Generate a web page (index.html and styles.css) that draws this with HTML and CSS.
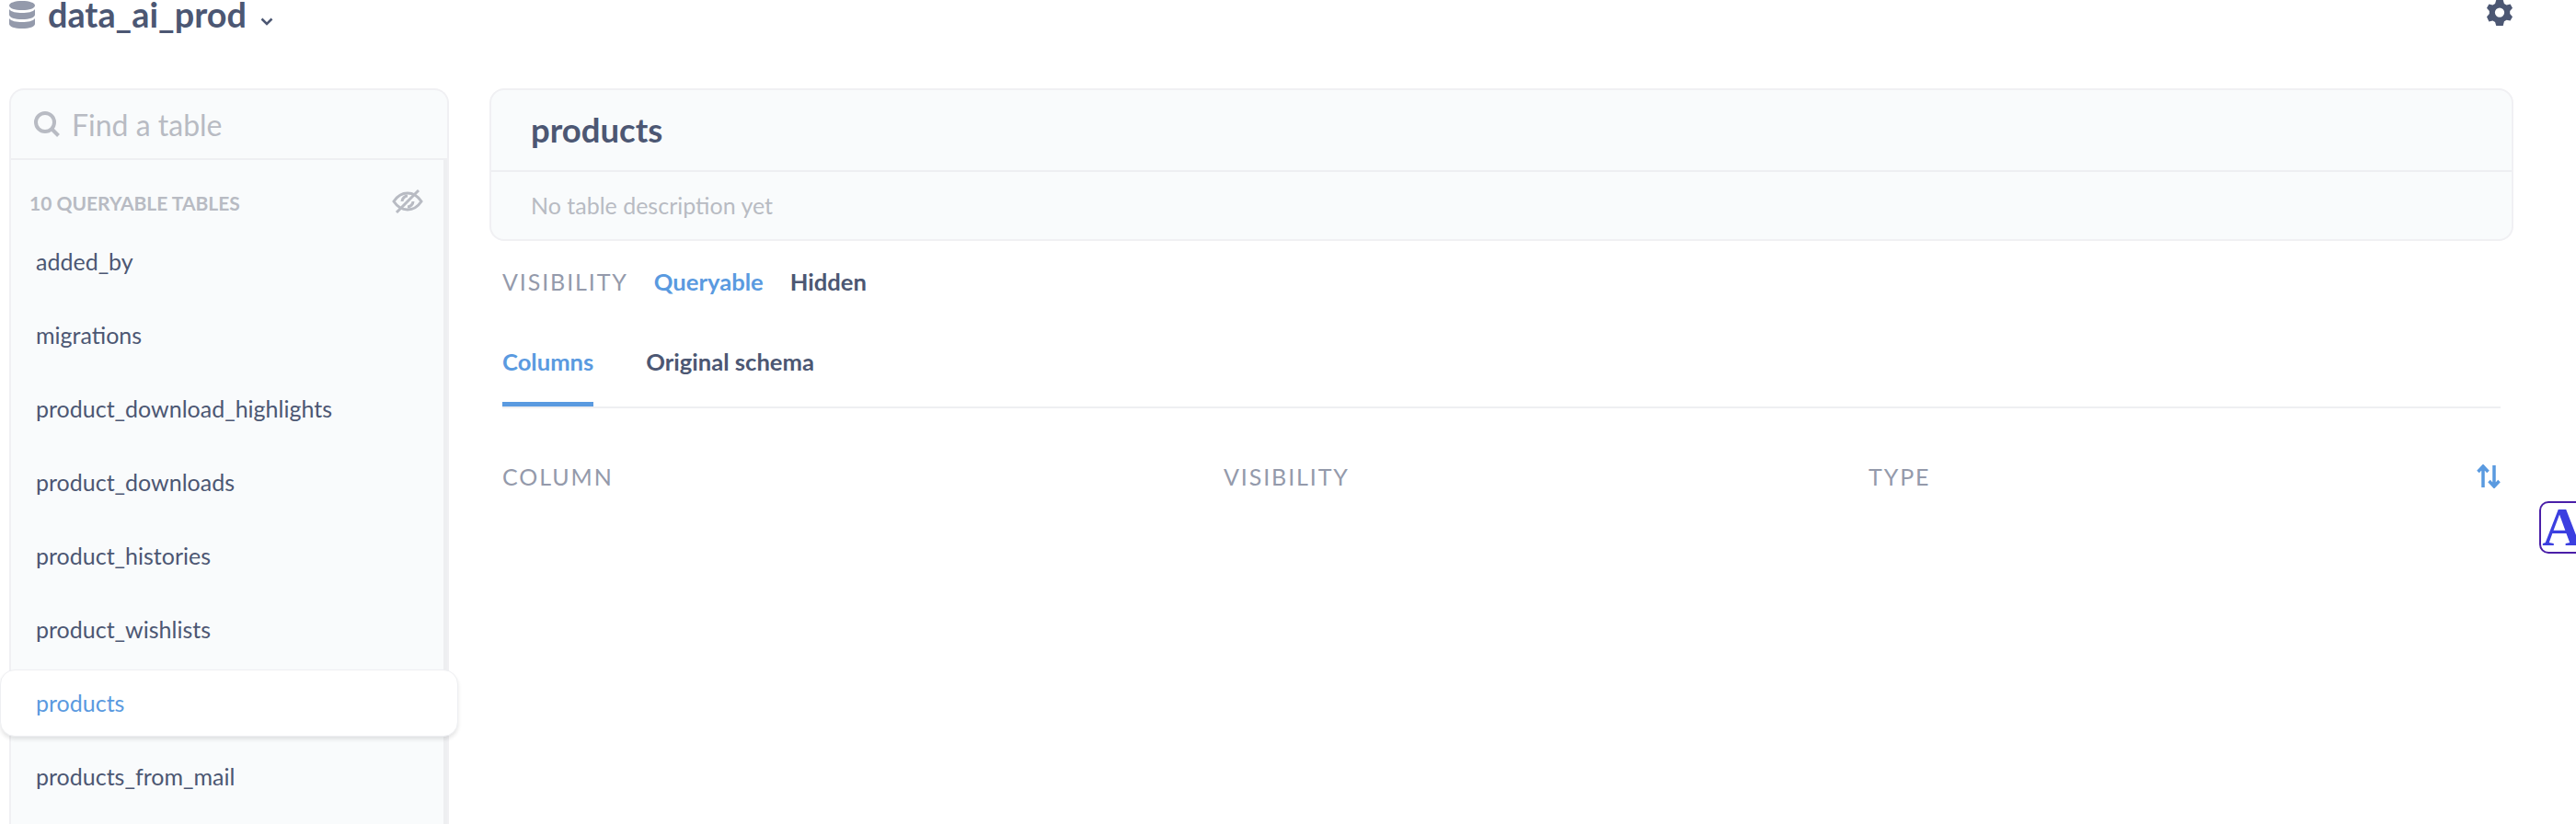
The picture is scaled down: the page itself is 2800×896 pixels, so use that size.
FILE: index.html
```html
<!DOCTYPE html>
<html lang="en">
<head>
  <meta charset="UTF-8" />
  <title>data_ai_prod - Table metadata</title>
  <link rel="stylesheet" href="styles.css">
</head>
<body>
  <div class="topbar">
    <div class="db-picker">
      <svg class="db-icon" viewBox="0 0 28 30"><path d="M14 0C6 0 0 2 0 5s6 5 14 5 14-2 14-5-6-5-14-5z"/><path d="M0 9v6c0 3 6 5 14 5s14-2 14-5V9c-2 3-8 4-14 4S2 12 0 9z"/><path d="M0 19v6c0 3 6 5 14 5s14-2 14-5v-6c-2 3-8 4-14 4S2 22 0 19z"/></svg>
      <span class="db-name">data_ai_prod</span>
      <svg class="chevron" viewBox="0 0 14 9"><path d="M1.500 1.500L7 7l5.500-5.500"/></svg>
    </div>
    <svg class="gear" viewBox="0 0 30 30"><path fill-rule="evenodd" d="M11 0h8l1.300 4.200 2.800 1.600 4.300-1L30 9.500l-3 3.300v3.400l3 3.300-2.600 4.700-4.300-1-2.800 1.600L19 30h-8l-1.300-4.200-2.800-1.600-4.300 1L0 19.500l3-3.300v-3.400L0 9.500l2.600-4.700 4.300 1 2.800-1.600zM15 9a5.500 5.500 0 1 0 0 11 5.500 5.500 0 0 0 0-11z"/></svg>
  </div>

  <div class="layout">
    <div class="sidebar">
      <div class="search">
        <svg class="search-icon" viewBox="0 0 28 28"><circle cx="12" cy="12" r="10"/><path d="M19 19l7.500 7.500"/></svg>
        <span>Find a table</span>
      </div>
      <div class="table-list">
        <div class="list-head">
          <span>10 Queryable Tables</span>
          <svg class="eye" viewBox="0 0 34 26"><path d="M2 13C6 7 11 4 17 4s11 3 15 9c-4 6-9 9-15 9S6 19 2 13z"/><path d="M11 13c0-3 3-6 6-6"/><path d="M23 13c0 3-3 6-6 6"/><path d="M29 1L5 25"/></svg>
        </div>
        <div class="table-item">added_by</div>
        <div class="table-item">migrations</div>
        <div class="table-item">product_download_highlights</div>
        <div class="table-item">product_downloads</div>
        <div class="table-item">product_histories</div>
        <div class="table-item">product_wishlists</div>
        <div class="table-item selected">products</div>
        <div class="table-item">products_from_mail</div>
      </div>
    </div>

    <div class="main">
      <div class="table-card">
        <div class="table-title">products</div>
        <div class="table-desc">No table description yet</div>
      </div>

      <div class="visibility-row">
        <span class="label">Visibility</span>
        <span class="option active">Queryable</span>
        <span class="option">Hidden</span>
      </div>

      <div class="tabs">
        <div class="tab active">Columns</div>
        <div class="tab">Original schema</div>
      </div>

      <div class="columns-head">
        <span class="label col-name">Column</span>
        <span class="label col-vis">Visibility</span>
        <span class="label col-type">Type</span>
        <svg class="sort" viewBox="0 0 26 26"><path d="M7 25V2M1.500 8L7 2l5.500 6"/><path d="M19 1v23M13.500 18l5.500 6 5.500-6"/></svg>
      </div>
    </div>
  </div>

  <div class="translate-badge"><span>A</span></div>
</body>
</html>
```

FILE: styles.css
```css
body {
  font-family: Lato, "Open Sans", sans-serif;
  background-color: #fff;
  color: #4c5773;
  margin: 0;
  padding: 0;
  height: 896px;
  overflow: hidden;
}
.topbar {
  display: flex;
  justify-content: space-between;
  height: 96px;
  padding: 0 68px 0 10px;
  box-sizing: border-box;
}
.db-picker {
  display: flex;
  align-items: flex-start;
}
.db-icon {
  width: 28px;
  height: 30px;
  margin-top: 1px;
  fill: #949aab;
}
.db-name {
  font-size: 37.800px;
  line-height: 38px;
  font-weight: 700;
  margin: -3px 0 0 14px;
}
.chevron {
  width: 14px;
  height: 9px;
  margin: 19px 0 0 15px;
  fill: none;
  stroke: #4c5773;
  stroke-width: 2.500;
}
.gear {
  width: 30px;
  height: 28px;
  fill: #4c5773;
}
.layout {
  display: flex;
  gap: 44px;
  padding: 0 68px 0 10px;
}
.sidebar {
  width: 478px;
  height: 800px;
  flex-shrink: 0;
  box-sizing: border-box;
  background-color: #f9fbfc;
  border: 2px solid #f0f0f3;
  border-bottom: none;
  border-radius: 16px 16px 0 0;
}
.search {
  display: flex;
  align-items: center;
  gap: 13px;
  height: 74px;
  padding-left: 25px;
  border-bottom: 2px solid #eeeff2;
  font-size: 32px;
  color: #b8bbc3;
}
.search-icon {
  width: 28px;
  height: 28px;
  fill: none;
  stroke: #b8bbc3;
  stroke-width: 4;
}
.table-list {
  height: 722px;
  border-right: 4px solid #eeeff1;
}
.list-head {
  display: flex;
  justify-content: space-between;
  padding: 34px 22px 0 20px;
  height: 36px;
  font-size: 21px;
  font-weight: 700;
  text-transform: uppercase;
  color: #b8bbc3;
}
.eye {
  width: 34px;
  height: 26px;
  margin-top: -2px;
  fill: none;
  stroke: #b8bbc3;
  stroke-width: 3;
}
.table-item {
  height: 80px;
  line-height: 80px;
  padding-left: 27px;
  font-size: 25px;
}
.table-item.selected {
  height: 71px;
  line-height: 71px;
  margin: 4px -16px 3px -12px;
  padding-left: 38px;
  position: relative;
  background-color: #fff;
  border: 1px solid #eeeff2;
  border-radius: 16px;
  box-shadow: 0 3px 4px rgba(0,0,0,0.1);
  color: #5a9ae0;
}
.main {
  width: 2200px;
  flex-shrink: 0;
}
.table-card {
  box-sizing: border-box;
  height: 166px;
  background-color: #f9fbfc;
  border: 2px solid #f0f0f3;
  border-radius: 16px;
}
.table-title {
  height: 87px;
  line-height: 87px;
  padding-left: 43px;
  font-size: 36.500px;
  font-weight: 700;
  border-bottom: 2px solid #eeeff2;
}
.table-desc {
  line-height: 72px;
  padding-left: 43px;
  font-size: 25px;
  color: #b8bbc3;
}
.visibility-row {
  display: flex;
  align-items: center;
  height: 56px;
  margin-top: 16px;
  padding-left: 14px;
  font-size: 25.600px;
  font-weight: 700;
}
.label {
  font-size: 25px;
  font-weight: 400;
  letter-spacing: 1.900px;
  text-transform: uppercase;
  color: #949aab;
}
.option {
  margin-left: 29px;
}
.visibility-row .label + .option {
  margin-left: 28px;
}
.option.active,
.tab.active {
  color: #5a9ae0;
}
.tabs {
  display: flex;
  gap: 57px;
  height: 110px;
  margin: 0 14px;
  box-sizing: border-box;
  padding-top: 38px;
  border-bottom: 2px solid #eeeff2;
  font-size: 25.600px;
  font-weight: 700;
}
.tab {
  height: 70px;
  line-height: 42px;
  box-sizing: border-box;
}
.tab.active {
  border-bottom: 5px solid #5a9ae0;
}
.columns-head {
  display: flex;
  align-items: center;
  height: 60px;
  margin: 44px 14px 0 14px;
}
.col-name {
  width: 784px;
}
.col-vis {
  width: 701px;
}
.col-type {
  flex: 1;
}
.sort {
  width: 26px;
  height: 26px;
  fill: none;
  stroke: #5a9ae0;
  stroke-width: 3.500;
}
.translate-badge {
  position: absolute;
  left: 2760px;
  top: 545px;
  width: 50px;
  height: 57px;
  box-sizing: border-box;
  border: 2px solid #4a1fa8;
  border-radius: 10px;
  background-color: #fff;
  overflow: hidden;
  text-align: center;
  font-family: "Liberation Serif", serif;
  font-size: 60px;
  line-height: 53px;
  font-weight: 700;
  color: #3b3fe0;
}
```
